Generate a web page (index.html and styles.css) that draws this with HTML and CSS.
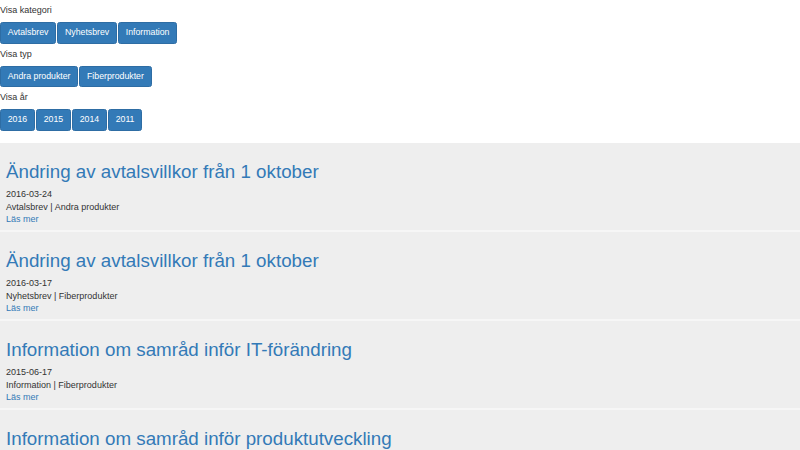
FILE: index.html
```html
<!DOCTYPE html>
<html lang="sv">
<head>
<meta charset="utf-8">
<title>Nyheter</title>
<link rel="stylesheet" href="styles.css">
</head>
<body>
<div class="filters">
  <div class="filter">
    <div class="filter-label">Visa kategori</div>
    <div class="btn-row">
      <button class="btn">Avtalsbrev</button>
      <button class="btn">Nyhetsbrev</button>
      <button class="btn">Information</button>
    </div>
  </div>
  <div class="filter">
    <div class="filter-label">Visa typ</div>
    <div class="btn-row">
      <button class="btn">Andra produkter</button>
      <button class="btn">Fiberprodukter</button>
    </div>
  </div>
  <div class="filter">
    <div class="filter-label">Visa år</div>
    <div class="btn-row">
      <button class="btn">2016</button>
      <button class="btn">2015</button>
      <button class="btn">2014</button>
      <button class="btn">2011</button>
    </div>
  </div>
</div>
<div class="list">
  <div class="item">
    <h2 class="item-title">Ändring av avtalsvillkor från 1 oktober</h2>
    <div class="item-line">2016-03-24</div>
    <div class="item-line">Avtalsbrev | Andra produkter</div>
    <a class="item-link" href="#">Läs mer</a>
  </div>
  <div class="item">
    <h2 class="item-title">Ändring av avtalsvillkor från 1 oktober</h2>
    <div class="item-line">2016-03-17</div>
    <div class="item-line">Nyhetsbrev | Fiberprodukter</div>
    <a class="item-link" href="#">Läs mer</a>
  </div>
  <div class="item">
    <h2 class="item-title">Information om samråd inför IT-förändring</h2>
    <div class="item-line">2015-06-17</div>
    <div class="item-line">Information | Fiberprodukter</div>
    <a class="item-link" href="#">Läs mer</a>
  </div>
  <div class="item">
    <h2 class="item-title">Information om samråd inför produktutveckling</h2>
    <div class="item-line">2015-05-20</div>
    <div class="item-line">Information | Fiberprodukter</div>
    <a class="item-link" href="#">Läs mer</a>
  </div>
</div>
</body>
</html>
```

FILE: styles.css
```css
html, body {
  margin: 0;
  padding: 0;
  background: #ffffff;
  font-family: "Liberation Sans", Arial, Helvetica, sans-serif;
  font-size: 9px;
  line-height: 12.5px;
  color: #333333;
}

.filters {
  padding-top: 4px;
  padding-bottom: 12.5px;
  display: flex;
  flex-direction: column;
  gap: 4px;
}

.filter {
  display: flex;
  flex-direction: column;
  gap: 5px;
}

.filter-label {
  height: 13px;
  line-height: 13px;
}

.btn-row {
  display: flex;
  gap: 1px;
}

.btn {
  font-family: "Liberation Sans", Arial, Helvetica, sans-serif;
  font-size: 8.75px;
  line-height: 13px;
  height: 21.5px;
  padding: 0 6.75px;
  margin: 0;
  color: #ffffff;
  background: #337ab7;
  border: 1px solid #2e6da4;
  border-radius: 2.5px;
  cursor: pointer;
}

.list {
  display: flex;
  flex-direction: column;
}

.item {
  background: #eeeeee;
  padding: 19px 6px 4.4px;
  border-bottom: 2px solid #f6f6f6;
}

.item-title {
  margin: 0 0 5.5px;
  font-size: 18.75px;
  line-height: 20.6px;
  font-weight: 500;
  color: #337ab7;
}

.item-line {
  line-height: 12.5px;
}

.item-link {
  display: block;
  color: #337ab7;
  text-decoration: none;
  line-height: 12.5px;
}
```
